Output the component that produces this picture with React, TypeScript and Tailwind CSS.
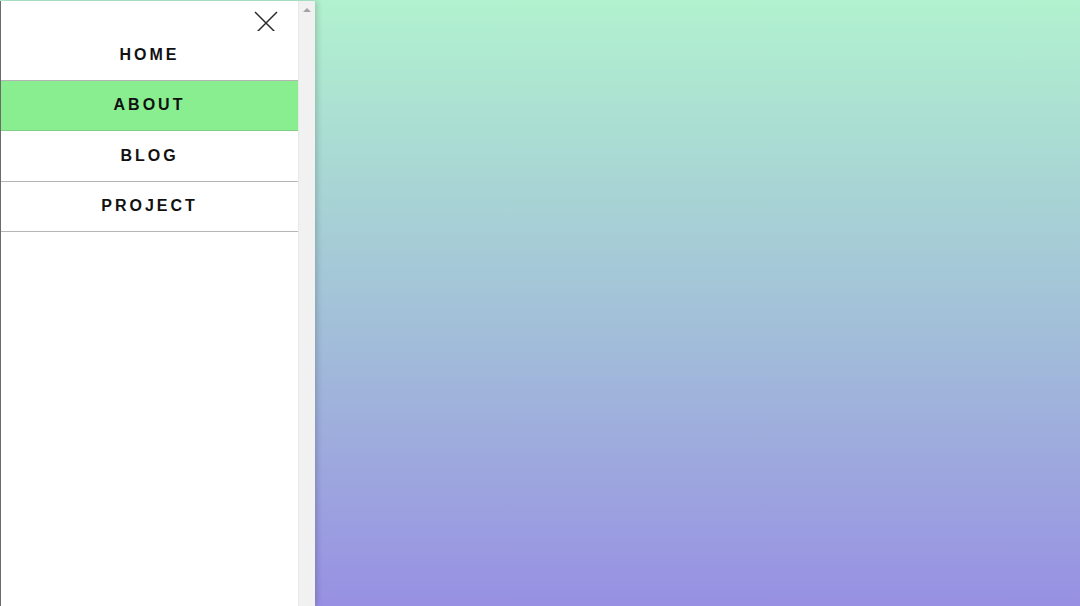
import React from "react";

const items = ["HOME", "ABOUT", "BLOG", "PROJECT"];

export default function App() {
  return (
    <div
      className="w-full h-[606px] overflow-hidden pt-px bg-[linear-gradient(to_bottom,#b1f2cf,#a3c3d8,#9890e3)]"
      style={{ fontFamily: '"Liberation Sans", Arial, sans-serif' }}
    >
      <div className="flex h-[605px] w-[315px] shadow-[2px_0_6px_rgba(0,0,0,0.18)]">
        <nav className="flex-1 flex flex-col bg-white border-l border-[#6b6b6b]">
          <div className="h-[30px] flex justify-end items-start pr-[20px] pt-[10px]">
            <button className="w-[24px] h-[24px] flex items-center justify-center">
              <svg width="24" height="24" viewBox="0 0 24 24">
                <path d="M1 1 L23 23 M23 1 L1 23" stroke="#2a2a2a" strokeWidth="1.5" fill="none" />
              </svg>
            </button>
          </div>
          {items.map((label) => (
            <a
              key={label}
              className={
                label === "ABOUT"
                  ? "h-[50px] flex items-center justify-center pb-px border-b border-[#7fcf86] bg-[#88ee90] text-[16px] font-bold tracking-[3px] text-[#111]"
                  : label === "HOME"
                  ? "h-[50px] flex items-center justify-center pb-[2px] border-b border-[#b5b5b5] bg-white text-[16px] font-bold tracking-[3px] text-[#111]"
                  : "h-[50.5px] flex items-center justify-center border-b border-[#b5b5b5] bg-white text-[16px] font-bold tracking-[3px] text-[#111]"
              }
            >
              {label}
            </a>
          ))}
        </nav>
        <div className="w-[17px] bg-[#f1f1f1] border-l border-[#e8e8e8] flex flex-col items-center pt-[7px]">
          <div className="w-0 h-0 border-l-[4px] border-r-[4px] border-b-[4px] border-l-transparent border-r-transparent border-b-[#a3a3a3]" />
        </div>
      </div>
    </div>
  );
}
